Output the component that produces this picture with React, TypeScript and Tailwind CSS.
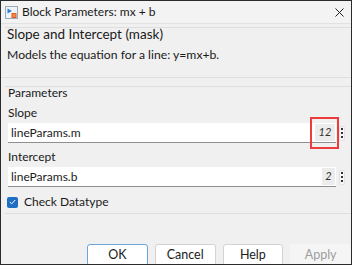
import React from 'react'

function BlockIcon() {
  return (
    <svg width="13" height="13" viewBox="0 0 13 13">
      <rect x="0.5" y="0.5" width="12" height="12" fill="#eef3f8" stroke="#9aa8b8" />
      <path d="M2.5 2.5 L7 5 L2.5 7.5 Z" fill="#2f7fd6" />
      <rect x="6.5" y="7" width="5" height="5" fill="#e2572b" />
      <rect x="7.5" y="8" width="3" height="3" fill="#f08a3c" />
    </svg>
  )
}

function Dots() {
  return (
    <div className="w-[6px] h-[15px] bg-[#f7f7f7] border border-[#e2e2e2] rounded-[2px] flex flex-col items-center justify-center gap-[2px]">
      <span className="w-[2px] h-[2px] bg-[#333]" />
      <span className="w-[2px] h-[2px] bg-[#333]" />
      <span className="w-[2px] h-[2px] bg-[#333]" />
    </div>
  )
}

function ParamField({ value, dims, wide }: { value: string; dims: string; wide?: boolean }) {
  return (
    <div className="flex items-center gap-[3px] ml-[7px] mr-[6px]">
      <div className="flex-1 h-[20px] bg-white border-b border-[#8f8f8f] flex items-center pl-[3px] pr-[1px]">
        <span className="flex-1 text-[12px] text-[#1a1a1a]">{value}</span>
        <span
          className={`h-[17px] ${wide ? 'w-[20px]' : 'w-[13px]'} bg-[#ececec] flex items-center justify-center italic text-[11px] text-[#333]`}
        >
          {dims}
        </span>
      </div>
      <Dots />
    </div>
  )
}

function Btn({ label, focus, disabled }: { label: string; focus?: boolean; disabled?: boolean }) {
  return (
    <div
      className={`w-[61px] h-[22px] rounded-[3px] flex items-center justify-center text-[12.5px] ${
        disabled
          ? 'bg-[#f5f5f5] text-[#9d9d9d] border border-[#f5f5f5]'
          : focus
            ? 'bg-white text-[#1a1a1a] border border-[#6aa6dc]'
            : 'bg-white text-[#1a1a1a] border border-[#d3d3d3]'
      }`}
    >
      {label}
    </div>
  )
}

export default function App() {
  return (
    <div
      className="w-[352px] h-[265px] border border-[#2b2b2b] bg-[#f0f0f0] overflow-hidden relative flex flex-col"
      style={{ fontFamily: '"Lato", "Liberation Sans", sans-serif' }}
    >
      <div className="h-[23px] bg-[#f3f3f3] border-b border-[#e2e2e2] flex items-center pl-[4px] pr-[6px] shrink-0">
        <BlockIcon />
        <span className="ml-[4px] text-[12px] text-[#1a1a1a] flex-1">Block Parameters: mx + b</span>
        <svg width="9" height="9" viewBox="0 0 9 9" className="mr-[1px]">
          <path d="M0.5 0.5 L8.5 8.5 M8.5 0.5 L0.5 8.5" stroke="#222" strokeWidth="1" />
        </svg>
      </div>

      <div className="mt-[3px] ml-[4px] h-[50px] border-t border-[#dedede] pl-[2px] shrink-0">
        <div className="-mt-[1px] text-[13.5px] leading-[14px] text-[#1a1a1a]">Slope and Intercept (mask)</div>
        <div className="mt-[7px] text-[12.2px] leading-[14px] text-[#1a1a1a]">
          Models the equation for a line: y=mx+b.
        </div>
      </div>

      <div className="border-t border-[#dedede] shrink-0" />

      <div className="mt-[8px] ml-[4px] h-[127px] border-t border-[#dedede] shrink-0">
        <div className="-mt-[1px] pl-[3px] text-[12px] leading-[14px] text-[#1a1a1a]">Parameters</div>
        <div className="mt-[6px] pl-[3px] text-[12px] leading-[14px] text-[#1a1a1a]">Slope</div>
        <div className="mt-[3px] -ml-[4px]">
          <ParamField value="lineParams.m" dims="12" wide />
        </div>
        <div className="mt-[7px] pl-[3px] text-[12px] leading-[14px] text-[#1a1a1a]">Intercept</div>
        <div className="mt-[3px] -ml-[4px]">
          <ParamField value="lineParams.b" dims="2" />
        </div>
        <div className="mt-[8px] flex items-center pl-[2px] gap-[6px]">
          <div className="w-[11px] h-[11px] rounded-[2px] bg-[#1f6ec4] flex items-center justify-center">
            <svg width="7" height="6" viewBox="0 0 7 6">
              <path d="M0.8 3 L2.7 4.8 L6.2 1" stroke="white" strokeWidth="1" fill="none" />
            </svg>
          </div>
          <span className="text-[12px] leading-[14px] text-[#1a1a1a]">Check Datatype</span>
        </div>
      </div>

      <div className="ml-[4px] border-t border-[#dedede] shrink-0" />

      <div className="mt-[30px] flex gap-[7px] pl-[86px] shrink-0">
        <Btn label="OK" focus />
        <Btn label="Cancel" />
        <Btn label="Help" />
        <Btn label="Apply" disabled />
      </div>

      <div className="absolute left-[309px] top-[116px] w-[29px] h-[32px] border-2 border-[#ee3b3b]" />
    </div>
  )
}
